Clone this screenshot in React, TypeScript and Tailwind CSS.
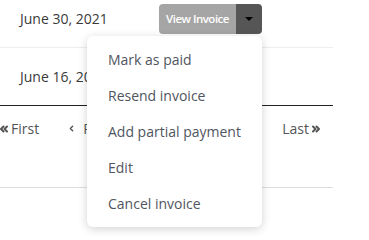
import { ChevronsLeft, ChevronsRight, ChevronLeft } from "lucide-react";

const menuItems = ["Mark as paid", "Resend invoice", "Add partial payment", "Edit", "Cancel invoice"];

function InvoiceRow({ date, first }: { date: string; first?: boolean }) {
  return (
    <div
      className={`flex h-[58px] items-center pl-5 ${first ? "-mt-[10px] border-b border-[#eeeeee]" : "border-b border-[#222222]"}`}
    >
      <span className="w-[139px] text-[14px] text-[#3a3a3a]">{date}</span>
      {first && (
        <div className="flex h-[30px] overflow-hidden rounded-[4px]">
          <button className="w-[77px] bg-[#a5a5a5] text-center text-[11.5px] font-semibold tracking-[-0.5px] text-white">View Invoice</button>
          <button className="flex w-[26px] items-center justify-center bg-[#565656]">
            <span className="h-0 w-0 border-x-[4px] border-t-[4px] border-x-transparent border-t-black" />
          </button>
        </div>
      )}
    </div>
  );
}

export default function App() {
  return (
    <div className="relative h-[237px] w-[369px] overflow-hidden bg-white" style={{ fontFamily: '"Open Sans", sans-serif' }}>
      <div className="w-[333px]">
        <InvoiceRow date="June 30, 2021" first />
        <InvoiceRow date="June 16, 2021" />
        <div className="flex h-[82px] items-start border-b border-[#dddddd] pt-[12px] text-[14px] text-[#555555]">
          <span className="-ml-[2px] flex items-center">
            <ChevronsLeft size={12} strokeWidth={4} className="mr-[1px]" />
            First
          </span>
          <span className="ml-[28px] flex items-center">
            <ChevronLeft size={9} strokeWidth={4} className="mr-[7px]" />
            Prev
          </span>
          <span className="ml-auto mr-[11px] flex items-center">
            Last
            <ChevronsRight size={12} strokeWidth={4} className="ml-[1px]" />
          </span>
        </div>
      </div>

      <div className="absolute left-[87px] top-[36px] w-[175px] rounded-[6px] bg-white pb-[6px] pt-[5px] shadow-[0_2px_10px_rgba(0,0,0,0.18)]">
        {menuItems.map(item => (
          <div key={item} className="flex h-9 items-center pl-[21px] text-[14px] text-[#505560]">
            {item}
          </div>
        ))}
      </div>
    </div>
  );
}
